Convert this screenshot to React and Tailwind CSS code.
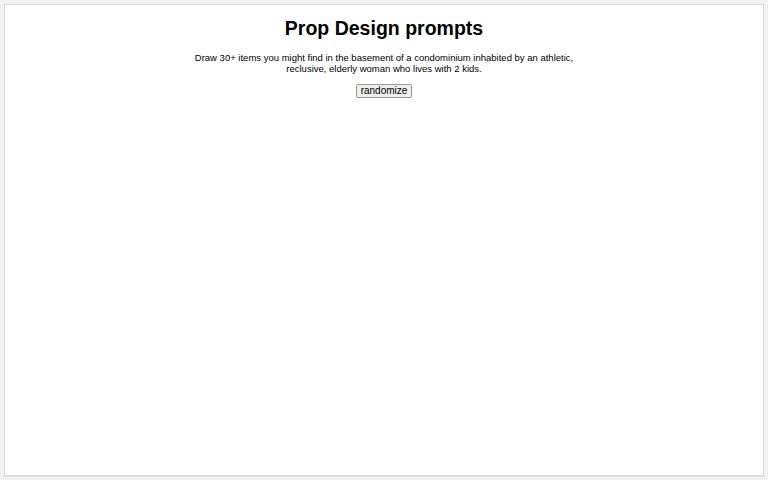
import React, { useState } from 'react';

const prompts = [
  'Draw 30+ items you might find in the basement of a condominium inhabited by an athletic, reclusive, elderly woman who lives with 2 kids.',
  'Draw 30+ items you might find in the attic of a farmhouse inhabited by a nervous, cheerful, young man who lives alone.',
  'Draw 30+ items you might find in the garage of a bungalow inhabited by a clumsy, sociable, middle-aged couple with 3 dogs.',
];

const App = () => {
  const [index, setIndex] = useState(0);

  const randomize = () => {
    setIndex((index + 1 + Math.floor(Math.random() * (prompts.length - 1))) % prompts.length);
  };

  return (
    <div className="h-[480px] w-[768px] bg-[#f1f1f1] p-[4px] font-['Liberation_Sans',Arial,sans-serif] text-black">
      <div className="flex h-full flex-col items-center border border-[#dadada] bg-white pt-[12px] shadow-[0_1px_1px_rgba(0,0,0,0.06)]">
        <h1 className="text-[19.5px] font-bold leading-[23px]">Prop Design prompts</h1>
        <p className="mt-[12px] max-w-[392px] text-center text-[9.5px] leading-[11px]">
          {prompts[index]}
        </p>
        <button
          onClick={randomize}
          className="mt-[10px] rounded-[2px] border border-[#9a9a9a] bg-[#efefef] px-[4px] text-[10px] leading-[12px] hover:bg-[#e5e5e5]"
        >
          randomize
        </button>
      </div>
    </div>
  );
};

export default App;
